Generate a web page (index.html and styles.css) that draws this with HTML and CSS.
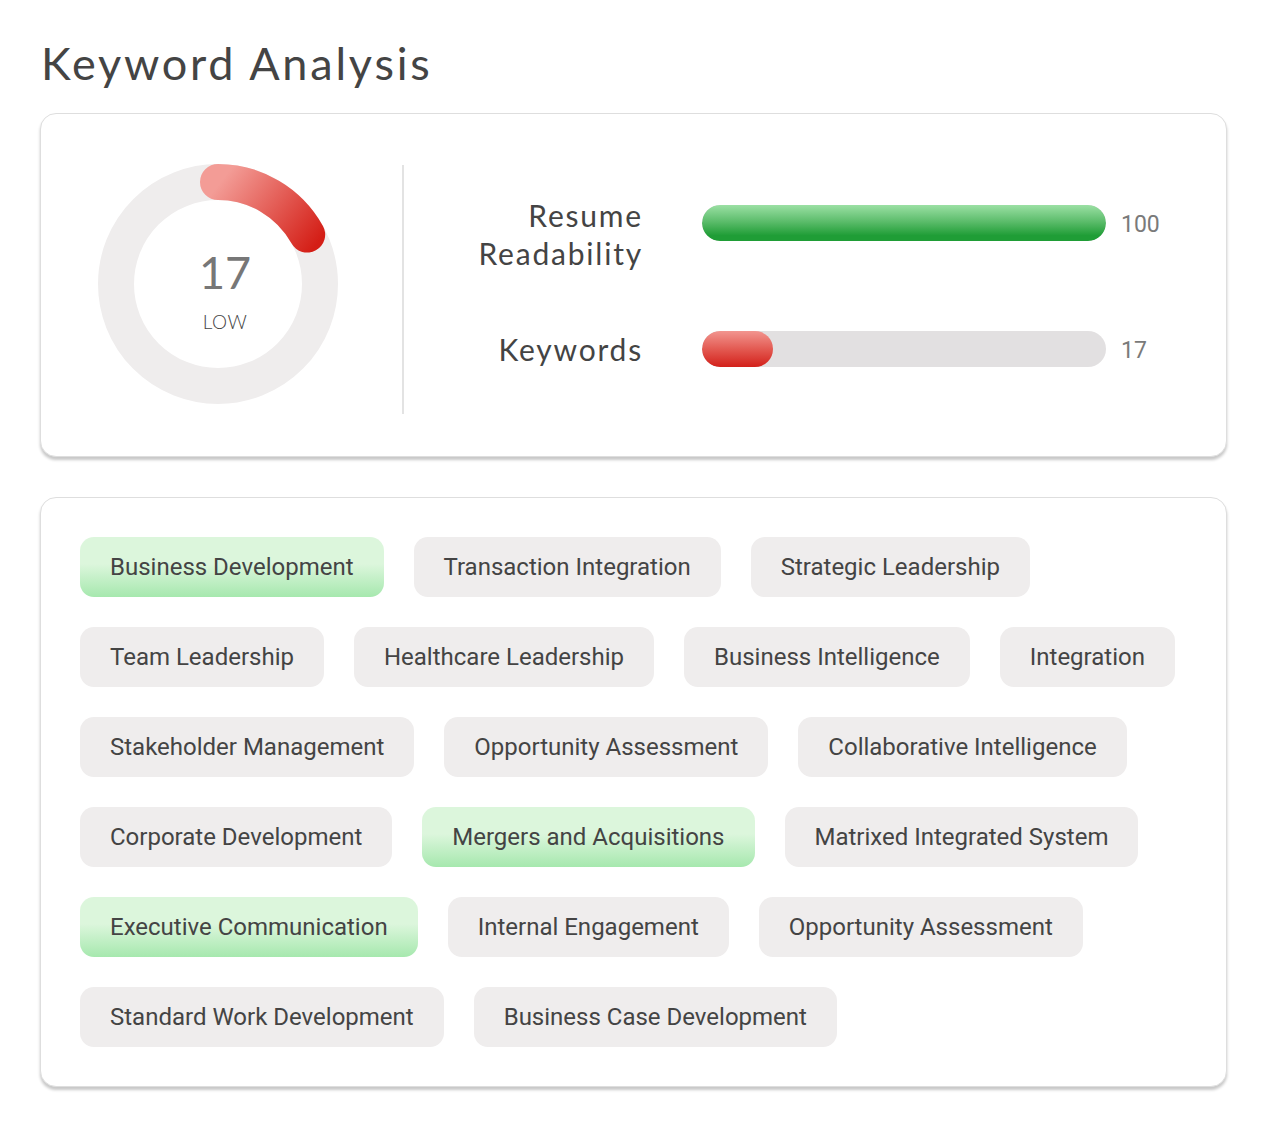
FILE: index.html
```html
<!DOCTYPE html>
<html lang="en">
<head>
    <meta charset="UTF-8">
    <meta name="viewport" content="width=device-width, initial-scale=1.0">
    <title>Keyword Analysis</title>
    <link rel="stylesheet" href="styles.css">
</head>
<body>
    <div class="page">
        <h1 class="title">Keyword Analysis</h1>

        <div class="card score-card">
            <div class="donut">
                <svg width="240" height="240" viewBox="0 0 240 240">
                    <defs>
                        <linearGradient id="arc-grad" gradientUnits="userSpaceOnUse" x1="125" y1="15" x2="215" y2="85">
                            <stop offset="0" stop-color="#f39c96"/>
                            <stop offset="1" stop-color="#d41e16"/>
                        </linearGradient>
                    </defs>
                    <circle cx="120" cy="120" r="102" fill="none" stroke="#efeded" stroke-width="36"/>
                    <path d="M120 18 A102 102 0 0 1 209.2 70.6" fill="none" stroke="url(#arc-grad)"
                          stroke-width="36" stroke-linecap="round"/>
                </svg>
                <div class="donut-label">
                    <div class="donut-value">17</div>
                    <div class="donut-text">LOW</div>
                </div>
            </div>

            <div class="divider"></div>

            <div class="metrics">
                <div class="metric metric-top">
                    <div class="metric-name">Resume<br>Readability</div>
                    <div class="bar"><div class="bar-fill green" style="width: 100%"></div></div>
                    <div class="metric-value">100</div>
                </div>
                <div class="metric">
                    <div class="metric-name">Keywords</div>
                    <div class="bar"><div class="bar-fill red" style="width: 17.5%"></div></div>
                    <div class="metric-value">17</div>
                </div>
            </div>
        </div>

        <div class="card keywords-card">
            <span class="chip found">Business Development</span>
            <span class="chip">Transaction Integration</span>
            <span class="chip">Strategic Leadership</span>
            <span class="chip">Team Leadership</span>
            <span class="chip">Healthcare Leadership</span>
            <span class="chip">Business Intelligence</span>
            <span class="chip">Integration</span>
            <span class="chip">Stakeholder Management</span>
            <span class="chip">Opportunity Assessment</span>
            <span class="chip">Collaborative Intelligence</span>
            <span class="chip">Corporate Development</span>
            <span class="chip found">Mergers and Acquisitions</span>
            <span class="chip">Matrixed Integrated System</span>
            <span class="chip found">Executive Communication</span>
            <span class="chip">Internal Engagement</span>
            <span class="chip">Opportunity Assessment</span>
            <span class="chip">Standard Work Development</span>
            <span class="chip">Business Case Development</span>
        </div>
    </div>
</body>
</html>
```

FILE: styles.css
```css
body {
    margin: 0;
    background: #fff;
    font-family: Lato, "Open Sans", sans-serif;
    color: #444;
}

.page {
    padding: 0 40px 40px;
}

.title {
    margin: 36px 0 0 1px;
    font-size: 45px;
    font-weight: 400;
    line-height: 54px;
    letter-spacing: 2.8px;
    color: #444;
}

.card {
    background: #fff;
    border: 1px solid #dedede;
    border-radius: 16px;
    box-shadow: 0 3px 3px rgba(0, 0, 0, 0.22);
}

/* верхняя карточка */
.score-card {
    margin-top: 23px;
    height: 342px;
    display: flex;
    align-items: center;
}

.donut {
    position: relative;
    width: 240px;
    height: 240px;
    margin-left: 57px;
    margin-top: -2px;
}

.donut svg {
    display: block;
}

.donut-label {
    position: absolute;
    top: 0;
    left: 0;
    right: 0;
    bottom: 0;
    padding-left: 14px;
    padding-top: 12px;
    display: flex;
    flex-direction: column;
    align-items: center;
    justify-content: center;
}

.donut-value {
    font-size: 45px;
    line-height: 50px;
    color: #777;
}

.donut-text {
    font-size: 19px;
    font-weight: 300;
    letter-spacing: 0.5px;
    color: #444;
    margin-top: 13px;
}

.divider {
    width: 2px;
    height: 249px;
    background: #e3e3e3;
    margin-left: 64px;
    margin-top: 8px;
}

.metrics {
    display: flex;
    flex-direction: column;
    gap: 58px;
    margin-top: -6px;
}

.metric {
    display: grid;
    grid-template-columns: 239px 404px auto;
    column-gap: 59px;
    align-items: center;
}

.metric-top {
    align-items: start;
}

.metric-top .bar {
    margin-top: 9px;
}

.metric-top .metric-value {
    margin-top: 15px;
}

.metric-name {
    text-align: right;
    font-size: 30px;
    line-height: 38px;
    letter-spacing: 1.8px;
    color: #444;
}

.bar {
    height: 36px;
    border-radius: 18px;
    background: #e2e0e1;
    overflow: hidden;
}

.bar-fill {
    height: 100%;
    border-radius: 18px;
}

.bar-fill.green {
    background: linear-gradient(to bottom, #9be0a4, #5dbd6c 45%, #1f9d36 85%);
}

.bar-fill.red {
    background: linear-gradient(to bottom, #f2958f, #e35a52 50%, #d3201a);
}

.metric-value {
    margin-left: -44px;
    margin-top: 3px;
    font-family: Roboto, sans-serif;
    font-size: 23px;
    color: #7a7a7a;
}

/* нижняя карточка с ключевыми словами */
.keywords-card {
    margin-top: 40px;
    padding: 39px 40px 39px 39px;
    display: flex;
    flex-wrap: wrap;
    gap: 30px;
}

.chip {
    display: flex;
    align-items: center;
    height: 60px;
    padding: 0 30px;
    border-radius: 14px;
    background: #efeded;
    font-family: Roboto, sans-serif;
    font-size: 24px;
    color: #444;
}

.chip.found {
    background: linear-gradient(to bottom, #dcf6dc 45%, #a6e8ae);
}
```
